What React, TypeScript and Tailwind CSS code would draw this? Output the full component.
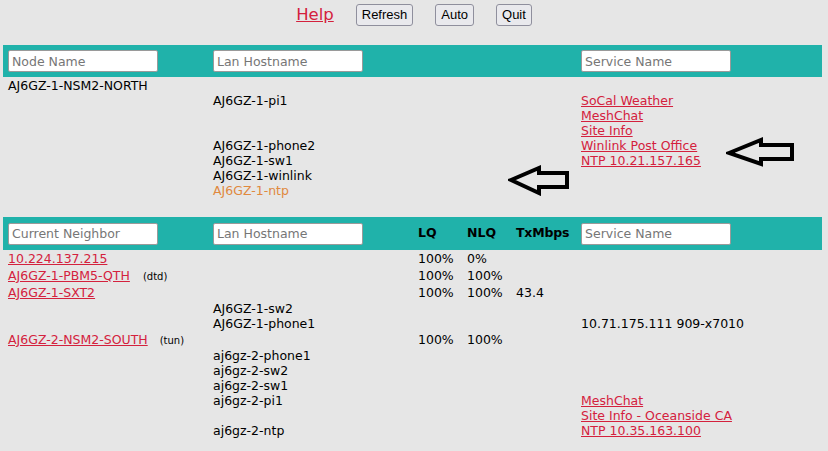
import React from 'react';

const cols = 'grid grid-cols-[205px_205px_49px_49px_65px_1fr] pl-[5px]';
const link = 'text-[#d4213d] underline';

type Cell = React.ReactNode;

function Row({ c, h = 'h-[15px] leading-[15px]' }: { c: Cell[]; h?: string }) {
  return (
    <div className={`${cols} ${h}`}>
      {[0, 1, 2, 3, 4, 5].map((i) => (
        <div key={i} className="whitespace-nowrap">
          {c[i] ?? ''}
        </div>
      ))}
    </div>
  );
}

function Filter({ placeholder }: { placeholder: string }) {
  return (
    <input
      placeholder={placeholder}
      className="w-[150px] h-[22px] bg-white border border-[#9a9a9a] rounded-[2px] px-[3px] text-[12.5px] font-normal placeholder:text-[#767676] outline-none"
    />
  );
}

function Arrow({ className, w, h, points }: { className: string; w: number; h: number; points: string }) {
  return (
    <svg className={`absolute ${className}`} width={w} height={h} viewBox={`0 0 ${w} ${h}`}>
      <polygon points={points} fill="none" stroke="#000" strokeWidth="4" strokeLinejoin="miter" />
    </svg>
  );
}

const btn =
  "h-[22px] px-[5px] border border-[#8f8f9d] rounded-[3px] bg-[#e9e9ed] font-['Liberation_Sans',sans-serif] text-[13px]";

export default function App() {
  return (
    <div className="relative min-h-screen bg-[#e6e6e6] text-black text-[12.5px] font-['DejaVu_Sans',sans-serif] overflow-hidden">
      {/* top controls */}
      <div className="flex justify-center items-start gap-[22px] pt-[4px] h-[45px]">
        <a className={`${link} text-[16.5px] leading-[22px]`}>Help</a>
        <button className={btn}>Refresh</button>
        <button className={btn}>Auto</button>
        <button className={btn}>Quit</button>
      </div>

      {/* local node */}
      <div className="ml-[3px] mr-[6px]">
        <div className={`${cols} h-[32px] items-center bg-[#20b2aa]`}>
          <div><Filter placeholder="Node Name" /></div>
          <div><Filter placeholder="Lan Hostname" /></div>
          <div />
          <div />
          <div />
          <div><Filter placeholder="Service Name" /></div>
        </div>
        <div className="pt-[1px] h-[121px]">
          <Row c={['AJ6GZ-1-NSM2-NORTH']} />
          <Row c={['', 'AJ6GZ-1-pi1', '', '', '', <a className={link}>SoCal Weather</a>]} />
          <Row c={['', '', '', '', '', <a className={link}>MeshChat</a>]} />
          <Row c={['', '', '', '', '', <a className={link}>Site Info</a>]} />
          <Row c={['', 'AJ6GZ-1-phone2', '', '', '', <a className={link}>Winlink Post Office</a>]} />
          <Row c={['', 'AJ6GZ-1-sw1', '', '', '', <a className={link}>NTP 10.21.157.165</a>]} />
          <Row c={['', 'AJ6GZ-1-winlink']} />
          <Row c={['', <span className="text-[#e0893e]">AJ6GZ-1-ntp</span>]} />
        </div>
      </div>

      {/* neighbors */}
      <div className="ml-[3px] mr-[6px] mt-[19px]">
        <div className={`${cols} h-[33px] items-center bg-[#20b2aa] font-bold`}>
          <div><Filter placeholder="Current Neighbor" /></div>
          <div><Filter placeholder="Lan Hostname" /></div>
          <div>LQ</div>
          <div>NLQ</div>
          <div className="tracking-[-0.2px]">TxMbps</div>
          <div><Filter placeholder="Service Name" /></div>
        </div>
        <Row h="h-[17px] leading-[17px]" c={[<a className={link}>10.224.137.215</a>, '', '100%', '0%']} />
        <Row
          h="h-[17px] leading-[17px]"
          c={[
            <>
              <a className={link}>AJ6GZ-1-PBM5-QTH</a>
              <span className="ml-[13px] text-[10px]">(dtd)</span>
            </>,
            '',
            '100%',
            '100%',
          ]}
        />
        <Row h="h-[17px] leading-[17px]" c={[<a className={link}>AJ6GZ-1-SXT2</a>, '', '100%', '100%', '43.4']} />
        <Row c={['', 'AJ6GZ-1-sw2']} />
        <Row c={['', 'AJ6GZ-1-phone1', '', '', '', '10.71.175.111 909-x7010']} />
        <Row
          h="h-[17px] leading-[17px]"
          c={[
            <>
              <a className={link}>AJ6GZ-2-NSM2-SOUTH</a>
              <span className="ml-[12px] text-[10px]">(tun)</span>
            </>,
            '',
            '100%',
            '100%',
          ]}
        />
        <Row c={['', 'aj6gz-2-phone1']} />
        <Row c={['', 'aj6gz-2-sw2']} />
        <Row c={['', 'aj6gz-2-sw1']} />
        <Row c={['', 'aj6gz-2-pi1', '', '', '', <a className={link}>MeshChat</a>]} />
        <Row c={['', '', '', '', '', <a className={link}>Site Info - Oceanside CA</a>]} />
        <Row c={['', 'aj6gz-2-ntp', '', '', '', <a className={link}>NTP 10.35.163.100</a>]} />
      </div>

      {/* hand-drawn arrows */}
      <Arrow
        className="left-[508px] top-[165px]"
        w={62}
        h={31}
        points="3,15 31,3 31,8 59,8 59,22 31,22 31,28"
      />
      <Arrow
        className="left-[726px] top-[137px]"
        w={69}
        h={30}
        points="3,16 35,3 35,8 66,8 66,22 35,22 35,27"
      />
    </div>
  );
}
